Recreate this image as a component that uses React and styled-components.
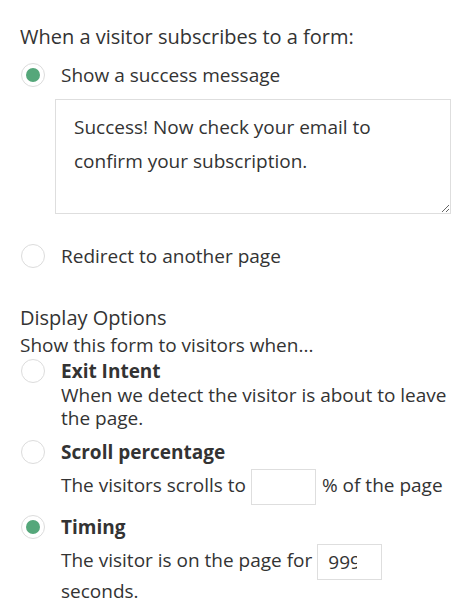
import React from "react";
import styled, { createGlobalStyle } from "styled-components";

const GlobalStyle = createGlobalStyle`
  html, body {
    margin: 0;
    background: #fff;
  }
  body {
    font-family: "Open Sans", "Liberation Sans", sans-serif;
    color: #333;
  }
`;

const Page = styled.div`
  padding: 22px 20px 0 20px;
`;

const Heading = styled.div`
  font-size: 20px;
  line-height: 30px;
  color: #333;
`;

const RadioRow = styled.label`
  display: flex;
  align-items: center;
  gap: 16px;
  margin-top: ${(p) => p.$mt || 0}px;
  cursor: pointer;
`;

const Radio = styled.span`
  flex: none;
  width: 24px;
  height: 24px;
  border-radius: 50%;
  border: 1px solid #dcdcdc;
  box-sizing: border-box;
  display: flex;
  align-items: center;
  justify-content: center;
  margin-left: 1px;

  &::after {
    content: "";
    width: 14px;
    height: 14px;
    border-radius: 50%;
    background: ${(p) => (p.$checked ? "#55a77a" : "transparent")};
  }
`;

const Label = styled.span`
  font-size: 19px;
  line-height: 26px;
`;

const Message = styled.textarea`
  display: block;
  margin: 11px 0 0 35px;
  width: 396px;
  height: 115px;
  box-sizing: border-box;
  border: 1px solid #dedede;
  padding: 10px 44px 11px 18px;
  font-family: inherit;
  font-size: 19px;
  line-height: 34px;
  color: #333;
  resize: vertical;
  outline: none;
`;

const SectionTitle = styled.div`
  margin-top: 35px;
  font-size: 20px;
  line-height: 28px;
`;

const SubTitle = styled.div`
  font-size: 19px;
  line-height: 26px;
`;

const Option = styled.div`
  display: flex;
  flex-direction: column;
  margin-top: ${(p) => p.$mt || 0}px;
`;

const OptionTitle = styled.span`
  font-size: 19px;
  font-weight: 700;
  line-height: 26px;
`;

const OptionBody = styled.div`
  margin-left: 41px;
  font-size: 19px;
  line-height: 23px;
  margin-top: ${(p) => p.$mt || 0}px;
`;

const InlineInput = styled.input`
  width: 65px;
  height: 36px;
  box-sizing: border-box;
  border: 1px solid #dedede;
  padding: 0 ${(p) => p.$padRight || 9}px 0 10px;
  margin: 0 6px 0 5px;
  font-family: inherit;
  font-size: 19px;
  color: #333;
  vertical-align: middle;
  outline: none;
`;

export default function App() {
  return (
    <>
      <GlobalStyle />
      <Page>
        <Heading>When a visitor subscribes to a form:</Heading>
        <RadioRow $mt={10}>
          <Radio $checked />
          <Label>Show a success message</Label>
        </RadioRow>
        <Message
          defaultValue={
            "Success! Now check your email to confirm your subscription."
          }
        />
        <RadioRow $mt={29}>
          <Radio />
          <Label>Redirect to another page</Label>
        </RadioRow>

        <SectionTitle>Display Options</SectionTitle>
        <SubTitle>Show this form to visitors when...</SubTitle>

        <Option>
          <RadioRow>
            <Radio />
            <OptionTitle>Exit Intent</OptionTitle>
          </RadioRow>
          <OptionBody>
            When we detect the visitor is about to leave the page.
          </OptionBody>
        </Option>

        <Option $mt={9}>
          <RadioRow>
            <Radio />
            <OptionTitle>Scroll percentage</OptionTitle>
          </RadioRow>
          <OptionBody $mt={4}>
            The visitors scrolls to
            <InlineInput type="text" defaultValue="" />% of the page
          </OptionBody>
        </Option>

        <Option $mt={9}>
          <RadioRow>
            <Radio $checked />
            <OptionTitle>Timing</OptionTitle>
          </RadioRow>
          <OptionBody $mt={4}>
            The visitor is on the page for
            <InlineInput type="text" defaultValue="999" $padRight={24} />
            seconds.
          </OptionBody>
        </Option>
      </Page>
    </>
  );
}
